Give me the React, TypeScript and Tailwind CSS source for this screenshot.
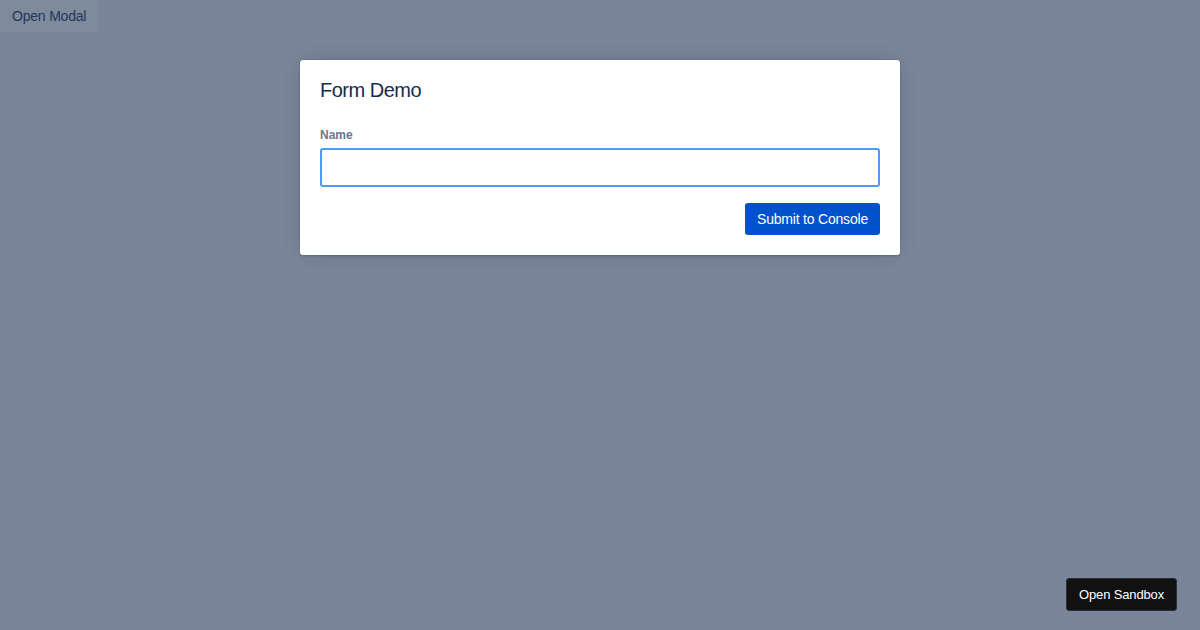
export default function App() {
  return (
    <div className="relative h-[630px] w-[1200px] overflow-hidden bg-[#7a8599] font-['Liberation_Sans',Arial,sans-serif]">
      <button className="h-[32px] bg-[#7f8a9d] px-[12px] text-[14px] tracking-[-0.2px] text-[#253858]">
        Open Modal
      </button>

      <div className="mx-auto mt-[28px] w-[600px] rounded-[3px] bg-white px-[20px] pb-[20px] pt-[18px] shadow-[0_0_0_1px_rgba(9,30,66,0.08),0_2px_1px_rgba(9,30,66,0.08),0_0_20px_-6px_rgba(9,30,66,0.31)]">
        <h1 className="text-[20px] leading-[24px] tracking-[-0.5px] text-[#172b4d]">Form Demo</h1>

        <div className="mt-[25px]">
          <label className="block text-[12px] font-bold leading-[16px] text-[#6b778c]">
            Name
          </label>
          <input
            className="mt-[5px] block h-[39px] w-full rounded-[3px] border-2 border-[#4c9aff] bg-white px-[6px] text-[14px] text-[#172b4d] outline-none"
            type="text"
          />
        </div>

        <div className="mt-[16px] flex justify-end">
          <button className="h-[32px] rounded-[3px] bg-[#0052cc] px-[12px] text-[14px] tracking-[-0.2px] text-white">
            Submit to Console
          </button>
        </div>
      </div>

      <button className="absolute bottom-[19px] right-[23px] h-[33px] rounded-[3px] border border-[#2a2f3a] bg-[#111111] px-[12px] text-[13px] tracking-[-0.15px] text-white">
        Open Sandbox
      </button>
    </div>
  );
}
